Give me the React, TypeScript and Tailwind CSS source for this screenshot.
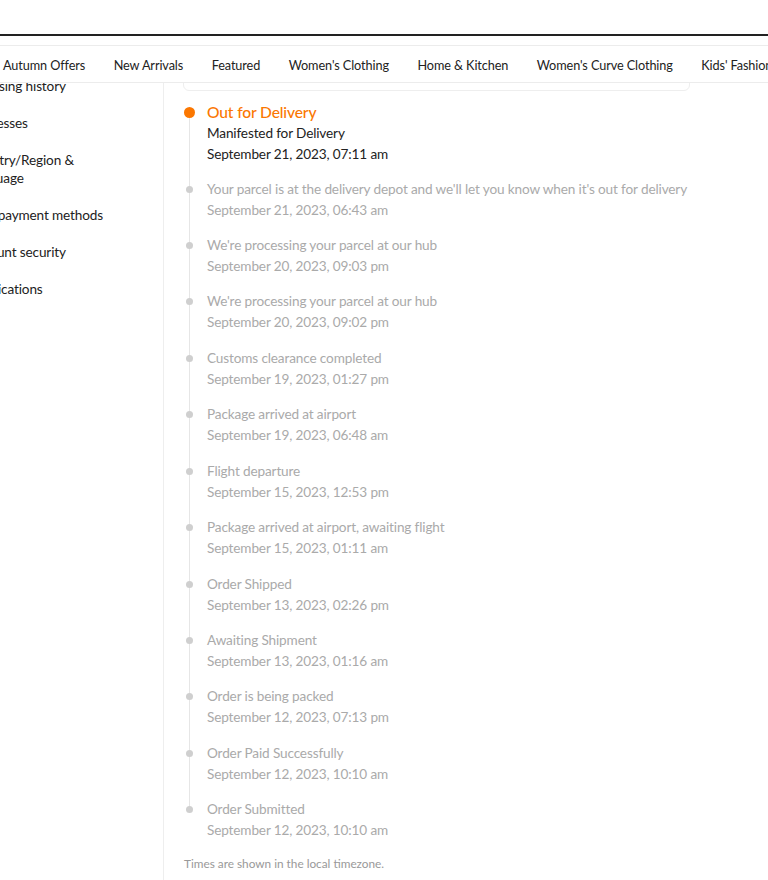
import React from "react";

const navItems = [
  "Autumn Offers",
  "New Arrivals",
  "Featured",
  "Women's Clothing",
  "Home & Kitchen",
  "Women's Curve Clothing",
  "Kids' Fashion",
  "Men's Clothing",
];

const sideItems = [
  "Browsing history",
  "Addresses",
  "Country/Region & Language",
  "Your payment methods",
  "Account security",
  "Notifications",
];

type Step = { title: string; time: string };

const steps: Step[] = [
  { title: "Your parcel is at the delivery depot and we'll let you know when it's out for delivery", time: "September 21, 2023, 06:43 am" },
  { title: "We're processing your parcel at our hub", time: "September 20, 2023, 09:03 pm" },
  { title: "We're processing your parcel at our hub", time: "September 20, 2023, 09:02 pm" },
  { title: "Customs clearance completed", time: "September 19, 2023, 01:27 pm" },
  { title: "Package arrived at airport", time: "September 19, 2023, 06:48 am" },
  { title: "Flight departure", time: "September 15, 2023, 12:53 pm" },
  { title: "Package arrived at airport, awaiting flight", time: "September 15, 2023, 01:11 am" },
  { title: "Order Shipped", time: "September 13, 2023, 02:26 pm" },
  { title: "Awaiting Shipment", time: "September 13, 2023, 01:16 am" },
  { title: "Order is being packed", time: "September 12, 2023, 07:13 pm" },
  { title: "Order Paid Successfully", time: "September 12, 2023, 10:10 am" },
  { title: "Order Submitted", time: "September 12, 2023, 10:10 am" },
];

export default function App() {
  return (
    <div
      className="relative h-[880px] w-[768px] overflow-hidden bg-white text-[#222]"
      style={{ fontFamily: "Lato, 'Noto Sans', sans-serif" }}
    >
      {/* header strip */}
      <div className="h-[45px] bg-white">
        <div className="h-[34px]" />
        <div className="h-[2px] bg-[#222]" />
      </div>

      {/* category bar */}
      <nav className="flex h-[38px] items-center gap-[28.5px] overflow-hidden whitespace-nowrap border-y border-[#ececec] bg-white pl-[3px] pt-[3px] text-[12.7px] tracking-[-0.1px] text-[#222]">
        {navItems.map((n) => (
          <span key={n} className="shrink-0">
            {n}
          </span>
        ))}
      </nav>

      {/* scrolled page body */}
      <main className="flex h-[797px] overflow-hidden">
        <aside className="-ml-[32px] w-[196px] shrink-0 border-r border-[#eee]">
          <ul className="-mt-[15.5px] w-[150px] text-[13.6px] leading-[18px] tracking-[-0.14px]">
            {sideItems.map((s) => (
              <li key={s} className="py-[9.5px]">
                {s}
              </li>
            ))}
          </ul>
        </aside>

        <section className="flex-1 pl-[19px]">
          <div className="-mt-[60px] h-[68px] w-[507px] rounded-md border border-[#eee]" />

          <ol className="mt-[10.5px] pl-[1px] tracking-[-0.14px]">
            <li className="flex gap-3">
              <div className="flex w-[11px] flex-col items-center">
                <div className="mt-[5px] h-[11px] w-[11px] shrink-0 rounded-full bg-[#fb7701]" />
                <div className="w-px flex-1 bg-[#e6e6e6]" />
              </div>
              <div className="pb-[14px] text-[13.6px] leading-[21px]">
                <div className="text-[15.6px] font-medium text-[#fb7701]">Out for Delivery</div>
                <div>Manifested for Delivery</div>
                <div>September 21, 2023, 07:11 am</div>
              </div>
            </li>
            {steps.map((s, i) => {
              const last = i === steps.length - 1;
              return (
                <li key={i} className="flex gap-3">
                  <div className="flex w-[11px] flex-col items-center">
                    <div className="h-[7px] w-px bg-[#e6e6e6]" />
                    <div className="h-[7px] w-[7px] shrink-0 rounded-full bg-[#cfcfcf]" />
                    <div className={last ? "flex-1" : "w-px flex-1 bg-[#e6e6e6]"} />
                  </div>
                  <div className="pb-[14.45px] text-[13.6px] leading-[21px] text-[#aaa]">
                    <div>{s.title}</div>
                    <div>{s.time}</div>
                  </div>
                </li>
              );
            })}
          </ol>

          <p className="pl-[1px] text-[11.8px] leading-[16px] text-[#999]">Times are shown in the local timezone.</p>
        </section>
      </main>
    </div>
  );
}
